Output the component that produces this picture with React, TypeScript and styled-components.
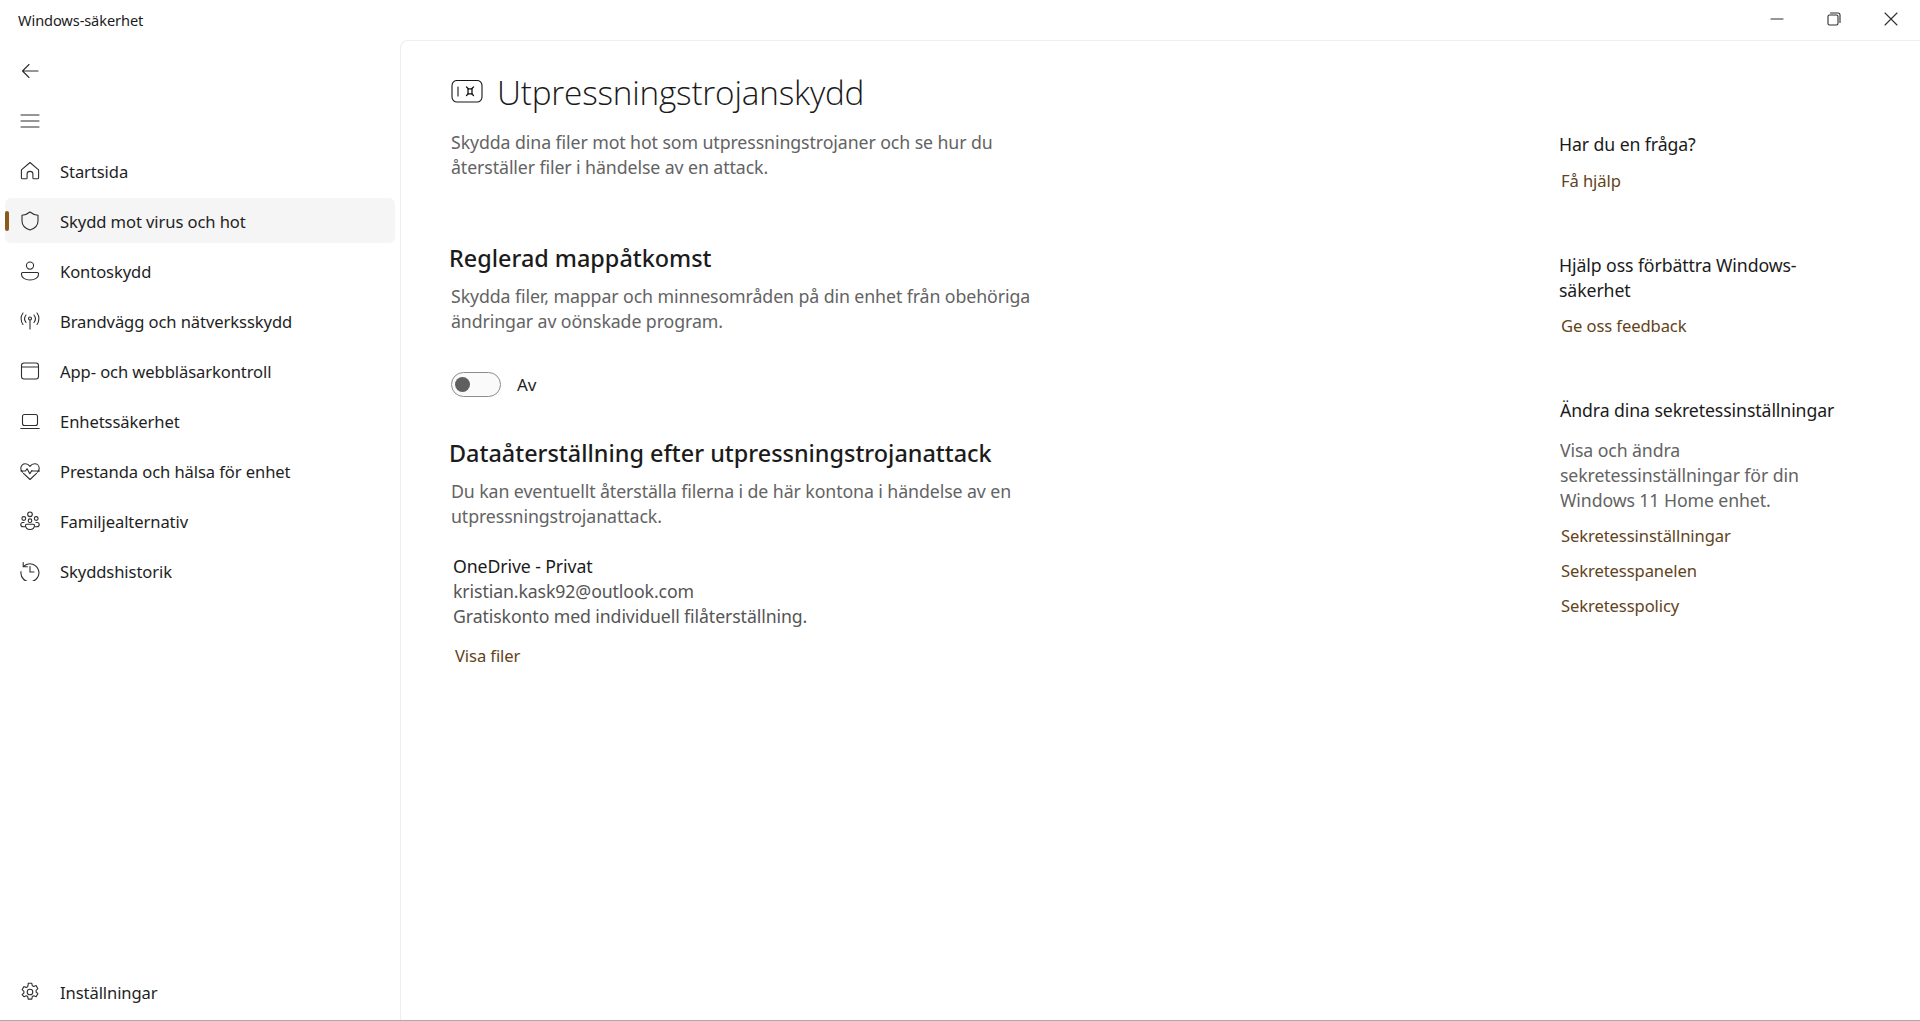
import React from 'react';
import styled, { createGlobalStyle } from 'styled-components';

const Global = createGlobalStyle`
  html, body { margin: 0; padding: 0; height: 100%; background: #fff; overflow: hidden; }
  #root { height: 1021px; }
  * { box-sizing: border-box; }
`;
const FONT = `"Noto Sans", "Open Sans", sans-serif`;

const Window = styled.div`
  width: 1920px; height: 1021px; display: flex; flex-direction: column;
  background: #fff; font-family: ${FONT}; color: #1b1b1b;
  border-bottom: 1px solid #a9a9a9;
`;
const TitleBar = styled.header`
  height: 40px; flex: none; display: flex; align-items: center; justify-content: space-between;
`;
const AppTitle = styled.div`
  padding-left: 18px; font-size: 14.6px; color: #1c1c1c; letter-spacing: -.1px;
`;
const WinControls = styled.div`display: flex; height: 38px; padding-right: 1px; align-self: flex-start;`;
const WinButton = styled.button`
  width: 57px; height: 38px; border: 0; background: transparent; padding: 0;
  display: flex; align-items: center; justify-content: center; color: #222;
`;
const Body = styled.div`flex: 1; min-height: 0; display: flex;`;
const Sidebar = styled.nav`
  width: 400px; flex: none; display: flex; flex-direction: column; padding: 6px 5px 3px;
`;
const ToolRow = styled.div`
  height: 50px; display: flex; align-items: center; padding-left: 15px; color: #333;
`;
const NavList = styled.div`display: flex; flex-direction: column;`;
const NavItem = styled.a<{ $active?: boolean }>`
  position: relative; height: ${p => p.$active ? 45 : 50}px;
  margin: ${p => p.$active ? '2px 0 3px' : '0'};
  padding-top: ${p => p.$active ? 1 : 0}px;
  display: flex; align-items: center; gap: 20px; padding-left: 15px;
  font-size: 16.6px; color: #1f1f1f; letter-spacing: -.1px;
  background: ${p => p.$active ? '#f5f5f5' : 'transparent'};
  border-radius: 6px; white-space: nowrap;
`;
const Indicator = styled.span`
  position: absolute; left: 0; top: 13px; width: 4px; height: 20px;
  border-radius: 2px; background: #8a5a1c;
`;
const Spacer = styled.div`flex: 1;`;
const Main = styled.main`
  flex: 1; min-width: 0; display: flex; justify-content: space-between;
  border-left: 1px solid #eeeeee; border-top: 1px solid #eeeeee; border-top-left-radius: 8px;
`;
const Content = styled.section`padding: 29px 0 0 49px; width: 800px;`;
const PageHead = styled.div`display: flex; align-items: center; gap: 14px; height: 44px; padding-left: 1px;`;
const PageTitle = styled.h1`
  margin: 0; font-size: 33.3px; font-weight: 300; color: #1a1a1a; line-height: 44px; letter-spacing: -.2px;
  font-family: "Open Sans", "Noto Sans", sans-serif;
`;
const Description = styled.p<{ $mt?: number }>`
  margin: ${p => p.$mt ?? 0}px 0 0 1px; font-size: 17.75px; line-height: 25px; color: #636363; letter-spacing: -.1px;
`;
const SectionTitle = styled.h2<{ $mt: number }>`
  margin: ${p => p.$mt}px 0 0 -1px; font-size: 23.4px; line-height: 32px; font-weight: 500; color: #1b1b1b;
`;
const ToggleRow = styled.div`display: flex; align-items: center; gap: 16px; margin: 37px 0 0 1px; height: 26px;`;
const ToggleTrack = styled.span`
  width: 50px; height: 25px; border-radius: 13px; border: 1px solid #8c8c8c; background: #fafafa;
  display: flex; align-items: center; padding-left: 3px;
`;
const ToggleKnob = styled.span`width: 15px; height: 15px; border-radius: 50%; background: #5f5f5f;`;
const ToggleLabel = styled.span`font-size: 17px; color: #1f1f1f;`;
const Account = styled.div`margin: 25px 0 0 3px; font-size: 17.7px; line-height: 25px; color: #555; letter-spacing: -.1px;`;
const AccountName = styled.div`color: #1b1b1b;`;
const LinkBlock = styled.a<{ $ml?: number; $mt?: number }>`
  display: block; margin: ${p => p.$mt ?? 0}px 0 0 ${p => p.$ml ?? 0}px; font-size: 16.6px; line-height: 25px;
  color: #63431a; letter-spacing: -.1px;
`;
const Aside = styled.aside`width: 361px; flex: none; padding-top: 91px;`;
const AsideGroup = styled.div<{ $mt?: number; $ml?: number }>`margin: ${p => p.$mt ?? 0}px 0 0 ${p => p.$ml ?? 0}px;`;
const AsideTitle = styled.div`font-size: 17.7px; line-height: 25px; color: #1b1b1b; letter-spacing: -.1px;`;
const AsideText = styled.div`margin-top: 15px; font-size: 17.7px; line-height: 25px; color: #636363; letter-spacing: -.1px;`;
const I = styled.svg.attrs({ fill: 'none', stroke: 'currentColor', strokeWidth: 1.1, strokeLinecap: 'round', strokeLinejoin: 'round' })`
  flex: none; display: block; color: #2e2e2e;
`;
const HeadIcon = styled(I)`color: #161616;`;

const icons: Record<string, React.ReactNode> = {
  home: <path d="M10 1.500 2 8.300c-.4.300-.6.700-.6 1.100v7.300c0 .7.500 1.100 1.100 1.100h3.700c.5 0 .9-.4.9-.9v-4.100c0-1.400 1.100-2.400 2.900-2.400s2.900 1 2.900 2.400v4.100c0 .5.400.9.900.9h3.700c.6 0 1.100-.4 1.100-1.100V9.400c0-.4-.2-.8-.6-1.100L10 1.500Z" />,
  shield: <path d="M10 1c2.400 2 5 3 8 3.200V10c0 4.400-2.700 7.300-8 9.100-5.300-1.800-8-4.700-8-9.100V4.200C5 4 7.600 3 10 1Z" />,
  person: <><circle cx="10" cy="4.600" r="3.600" /><path d="M2.500 11.500h15c.6 0 1 .4 1 1v1c0 3-3.500 5.500-8.500 5.500S1.500 16.500 1.500 13.500v-1c0-.6.400-1 1-1Z" /></>,
  net: <><circle cx="10" cy="7.500" r="1.500" /><path d="M10 9v9" /><path d="M6 4c-1.700 2.200-1.700 5.300 0 7.500M14 4c1.700 2.200 1.700 5.300 0 7.500M3 2C.5 5.200.5 10.300 3 13.500M17 2c2.500 3.200 2.500 8.300 0 11.500" /></>,
  app: <><rect x="1.500" y="2" width="17" height="16" rx="2.500" /><path d="M1.500 6h17" /></>,
  laptop: <><rect x="2.500" y="3.500" width="15" height="11" rx="2" /><path d="M.8 17.500h18.400" /></>,
  heart: <><path d="M2.500 11.200C1.300 10 .8 8.800.8 7.300c0-2.600 2-4.600 4.500-4.600 1.900 0 3.500 1 4.700 2.700 1.200-1.700 2.800-2.700 4.700-2.700 2.500 0 4.500 2 4.500 4.600 0 1.500-.5 2.700-1.700 3.900" /><path d="M1 10h4.500l1.600-2.300 2.700 5 2-3.100.7.400h7" /><path d="M3.500 12.300 10 18.500l6.500-6.200" /></>,
  family: <><circle cx="10" cy="3.300" r="2.300" /><circle cx="3.800" cy="7.500" r="1.900" /><circle cx="16.200" cy="7.500" r="1.900" /><circle cx="10" cy="9.700" r="1.800" /><path d="M6.500 13.300h7c.6 0 1 .4 1 1 0 2.500-1.800 4.200-4.500 4.200s-4.500-1.700-4.500-4.200c0-.6.400-1 1-1Z" /><path d="M4 11.500H3C1.700 11.500.8 12.300.8 13.500s1 2.300 2.400 2.300H5M16 11.500h1c1.300 0 2.200.8 2.200 2s-1 2.300-2.400 2.300H15" /></>,
  history: <><path d="M3.500 5.500A9 9 0 1 1 1 10.500" /><path d="M3.200 1.500v4.200h4.200" /><path d="M10 5.500v5.500h4" /></>,
  gear: <><circle cx="10" cy="10" r="2.800" /><path d="M8.200 1.300h3.600l.5 2.400 1.500.8 2.300-.9 1.800 3.100-1.800 1.600v1.700l1.800 1.600-1.800 3.100-2.300-.9-1.500.8-.5 2.500H8.200l-.5-2.500-1.500-.8-2.300.9L2.100 12.600l1.800-1.600V9.300L2.100 7.700l1.800-3.100 2.300.9 1.500-.8.500-2.400Z" /></>,
};

const NavIcon = ({ name }: { name: string }) => (
  <I width="20" height="20" viewBox="0 0 20 20">{icons[name]}</I>
);

const items = [
  ['home', 'Startsida'], ['shield', 'Skydd mot virus och hot'], ['person', 'Kontoskydd'],
  ['net', 'Brandvägg och nätverksskydd'], ['app', 'App- och webbläsarkontroll'], ['laptop', 'Enhetssäkerhet'],
  ['heart', 'Prestanda och hälsa för enhet'], ['family', 'Familjealternativ'], ['history', 'Skyddshistorik'],
];

export default function App() {
  return (
    <Window>
      <Global />
      <TitleBar>
        <AppTitle>Windows-säkerhet</AppTitle>
        <WinControls>
          <WinButton aria-label="Minimera"><I width="14" height="14" viewBox="0 0 14 14"><path d="M1 7h12" /></I></WinButton>
          <WinButton aria-label="Återställ"><I width="14" height="14" viewBox="0 0 14 14"><rect x="1" y="3" width="10" height="10" rx="1.500" /><path d="M3.500 1h7.500A2 2 0 0 1 13 3v7.500" /></I></WinButton>
          <WinButton aria-label="Stäng"><I width="14" height="14" viewBox="0 0 14 14"><path d="M1 1l12 12M13 1 1 13" /></I></WinButton>
        </WinControls>
      </TitleBar>
      <Body>
        <Sidebar>
          <ToolRow><I width="20" height="20" viewBox="0 0 20 20"><path d="M3 10h15M9 3.500 2.500 10 9 16.500" /></I></ToolRow>
          <ToolRow><I width="20" height="20" viewBox="0 0 20 20"><path d="M1 4h18M1 10h18M1 16h18" /></I></ToolRow>
          <NavList>
            {items.map(([icon, label], i) => (
              <NavItem key={label} $active={i === 1}>
                {i === 1 && <Indicator />}
                <NavIcon name={icon} />
                {label}
              </NavItem>
            ))}
          </NavList>
          <Spacer />
          <NavItem><NavIcon name="gear" />Inställningar</NavItem>
        </Sidebar>
        <Main>
          <Content>
            <PageHead>
              <HeadIcon width="32" height="24" viewBox="0 0 32 24" strokeWidth={2}>
                <rect x="1" y="0.500" width="30" height="21.500" rx="5" />
                <path d="M7 7v9" />
                <path d="M15.500 7l1.800 1.800M22.500 7l-1.800 1.800M15.500 15.500l1.800-1.800M22.500 15.500l-1.800-1.800" strokeWidth={1.3} />
                <rect x="17" y="8.800" width="4" height="5" strokeWidth={1.3} />
              </HeadIcon>
              <PageTitle>Utpressningstrojanskydd</PageTitle>
            </PageHead>
            <Description $mt={16}>Skydda dina filer mot hot som utpressningstrojaner och se hur du<br />återställer filer i händelse av en attack.</Description>
            <SectionTitle $mt={62}>Reglerad mappåtkomst</SectionTitle>
            <Description $mt={10}>Skydda filer, mappar och minnesområden på din enhet från obehöriga<br />ändringar av oönskade program.</Description>
            <ToggleRow><ToggleTrack><ToggleKnob /></ToggleTrack><ToggleLabel>Av</ToggleLabel></ToggleRow>
            <SectionTitle $mt={40}>Dataåterställning efter utpressningstrojanattack</SectionTitle>
            <Description $mt={10}>Du kan eventuellt återställa filerna i de här kontona i händelse av en<br />utpressningstrojanattack.</Description>
            <Account>
              <AccountName>OneDrive - Privat</AccountName>
              kristian.kask92@outlook.com<br />
              Gratiskonto med individuell filåterställning.
            </Account>
            <LinkBlock $ml={5} $mt={14}>Visa filer</LinkBlock>
          </Content>
          <Aside>
            <AsideGroup>
              <AsideTitle>Har du en fråga?</AsideTitle>
              <LinkBlock $ml={2} $mt={11}>Få hjälp</LinkBlock>
            </AsideGroup>
            <AsideGroup $mt={60}>
              <AsideTitle>Hjälp oss förbättra Windows-<br />säkerhet</AsideTitle>
              <LinkBlock $ml={2} $mt={10}>Ge oss feedback</LinkBlock>
            </AsideGroup>
            <AsideGroup $mt={60} $ml={1}>
              <AsideTitle>Ändra dina sekretessinställningar</AsideTitle>
              <AsideText>Visa och ändra<br />sekretessinställningar för din<br />Windows 11 Home enhet.</AsideText>
              <LinkBlock $ml={1} $mt={10}>Sekretessinställningar</LinkBlock>
              <LinkBlock $ml={1} $mt={10}>Sekretesspanelen</LinkBlock>
              <LinkBlock $ml={1} $mt={10}>Sekretesspolicy</LinkBlock>
            </AsideGroup>
          </Aside>
        </Main>
      </Body>
    </Window>
  );
}
